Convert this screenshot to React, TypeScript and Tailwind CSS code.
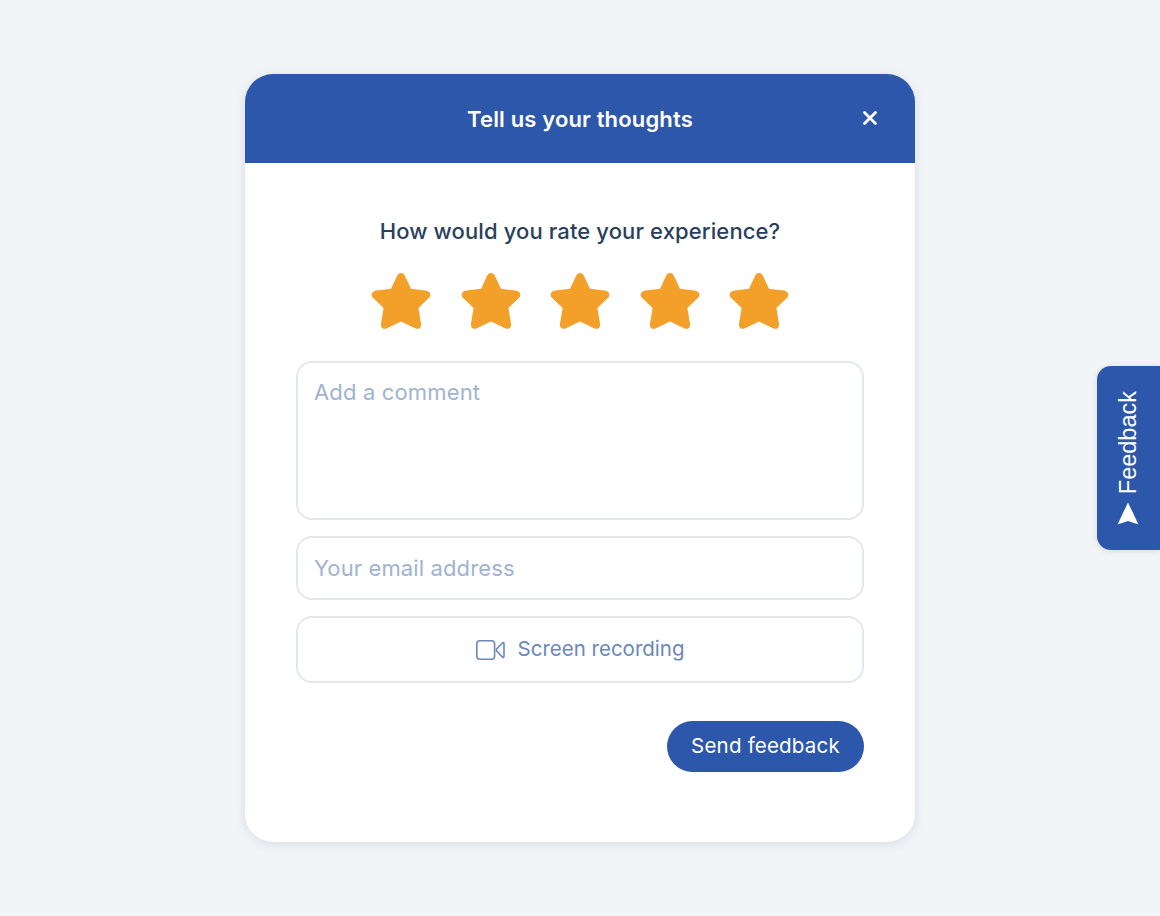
import React from 'react';
import { X } from 'lucide-react';

const Star: React.FC = () => (
  <svg viewBox="0 0 60 60" className="w-[60px] h-[60px]" aria-hidden="true">
    <path
      d="M30 3 C32 3 33.2 4.2 34 6 L40 18.8 L54.4 20.6 C59.4 21.2 60.8 25.4 57.8 28 L47.4 38 L50 53.6 C50.6 58 47.4 60 44 58.2 L30 51.6 L16 58.2 C12.6 60 9.4 58 10 53.6 L12.6 38 L2.2 28 C-0.8 25.4 0.6 21.2 5.6 20.6 L20 18.8 L26 6 C26.8 4.2 28 3 30 3 Z"
      fill="#f3a02a"
    />
  </svg>
);

const App: React.FC = () => {
  return (
    <div className="relative w-full h-[916px] bg-[#f1f5f8] flex items-center justify-center overflow-hidden font-['Inter',sans-serif]">
      <div className="w-[670px] h-[768px] bg-white rounded-[28px] shadow-[0_2px_12px_rgba(40,60,90,0.12)] overflow-hidden">
        <div className="relative h-[89px] bg-[#2c57ab] flex items-center justify-center">
          <h2 className="text-[22px] font-semibold text-white leading-none tracking-[0.15px] mt-[1px]">Tell us your thoughts</h2>
          <button className="absolute right-[34px] top-[33px] text-white">
            <X size={22} strokeWidth={3} />
          </button>
        </div>

        <div className="px-[51px] pt-[54px] flex flex-col">
          <p className="text-[22px] font-medium text-[#2a3f5c] text-center leading-[28px] tracking-[0.12px]">
            How would you rate your experience?
          </p>
          <div className="flex justify-center gap-[29.5px] mt-[24.5px]">
            <Star />
            <Star />
            <Star />
            <Star />
            <Star />
          </div>

          <textarea
            placeholder="Add a comment"
            className="mt-[31.5px] w-full h-[159px] resize-none rounded-[16px] border-2 border-[#e2e8ee] px-[16px] pt-[15px] pb-[14px] text-[22px] leading-[28px] tracking-[0.15px] outline-none placeholder:text-[#a0b3d0]"
          />
          <input
            placeholder="Your email address"
            className="mt-[16px] w-full h-[64px] rounded-[16px] border-2 border-[#e2e8ee] px-[16px] text-[22px] tracking-[0.12px] outline-none placeholder:text-[#a0b3d0]"
          />
          <button className="mt-[16px] w-full h-[67px] rounded-[16px] border-2 border-[#e2e8ee] flex items-center justify-center gap-[13px] text-[20.5px] text-[#6a88b8]">
            <svg viewBox="0 0 29 20" className="w-[29px] h-[20px]" fill="none" stroke="#6a88b8" strokeWidth="1.6" strokeLinejoin="round" aria-hidden="true">
              <rect x="0.8" y="0.8" width="17.8" height="18.4" rx="3" />
              <path d="M20.5 9 L26.4 3 Q28 1.8 28 4 V16 Q28 18.2 26.4 17 L20.5 11 Z" />
            </svg>
            Screen recording
          </button>

          <div className="flex justify-end mt-[38px]">
            <button className="w-[197px] h-[51px] rounded-full bg-[#2c57ab] text-white text-[20.5px] tracking-[0.2px] font-normal leading-none">
              Send feedback
            </button>
          </div>
        </div>
      </div>

      <div className="absolute right-0 top-[366px] w-[63.5px] h-[184px] bg-[#2c57ab] rounded-l-[14px] flex flex-col items-center justify-end pb-[25px] gap-[8px] shadow-[0_1px_6px_rgba(40,60,90,0.15)]">
        <span className="[writing-mode:vertical-rl] rotate-180 text-white text-[23.5px] font-['Liberation_Sans',sans-serif] leading-none">
          Feedback
        </span>
        <svg viewBox="0 0 22 23" className="w-[22px] h-[23px]" aria-hidden="true">
          <path d="M11 0.5 L21.5 22.5 L11 19 L0.5 22.5 Z" fill="#fff" />
        </svg>
      </div>
    </div>
  );
};

export default App;
